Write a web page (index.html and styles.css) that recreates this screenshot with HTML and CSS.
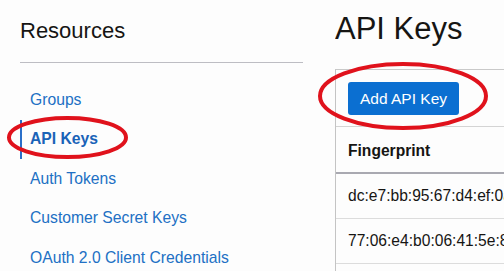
FILE: index.html
```html
<!DOCTYPE html>
<html lang="en">
<head>
<meta charset="utf-8">
<title>API Keys</title>
<link rel="stylesheet" href="styles.css">
</head>
<body>
<div class="page">
  <aside class="sidebar">
    <h2 class="res-title">Resources</h2>
    <div class="divider"></div>
    <nav class="nav">
      <a class="nav-item">Groups</a>
      <a class="nav-item active">API Keys</a>
      <a class="nav-item">Auth Tokens</a>
      <a class="nav-item">Customer Secret Keys</a>
      <a class="nav-item">OAuth 2.0 Client Credentials</a>
    </nav>
  </aside>
  <main class="main">
    <h1 class="page-title">API Keys</h1>
    <section class="panel">
      <div class="toolbar">
        <button class="btn-primary">Add API Key</button>
      </div>
      <div class="row head"><span class="cell">Fingerprint</span></div>
      <div class="row"><span class="cell">dc:e7:bb:95:67:d4:ef:0a:3c:91:5f:2b:7e:44:d1:08</span></div>
      <div class="row"><span class="cell">77:06:e4:b0:06:41:5e:8c:2a:19:f3:6d:b7:50:ce:12</span></div>
      <div class="row"><span class="cell"></span></div>
    </section>
  </main>
</div>
<svg class="annot" width="504" height="271" viewBox="0 0 504 271" aria-hidden="true">
  <ellipse cx="67.5" cy="137.5" rx="58.5" ry="19.5" fill="none" stroke="#e0121c" stroke-width="4"/>
  <ellipse cx="403" cy="96" rx="83" ry="32" fill="none" stroke="#e0121c" stroke-width="4"/>
</svg>
</body>
</html>
```
FILE: styles.css
```css
html, body {
  margin: 0;
  padding: 0;
  background: #fdfdfd;
  overflow: hidden;
}
body {
  font-family: "Liberation Sans", Arial, sans-serif;
  color: #161513;
  width: 504px;
  height: 271px;
  position: relative;
}
.page {
  display: flex;
  gap: 32px;
  height: 271px;
}
.sidebar {
  flex: 0 0 283px;
  padding-left: 20px;
}
.res-title {
  margin: 18px 0 0;
  font-size: 22px;
  line-height: 26px;
  font-weight: normal;
  color: #161513;
}
.divider {
  margin-top: 18px;
  border-top: 1px solid #bdbdc3;
}
.nav {
  display: flex;
  flex-direction: column;
  margin-top: 17px;
}
.nav-item {
  display: flex;
  align-items: center;
  height: 39.5px;
  padding-left: 8px;
  border-left: 2px solid transparent;
  font-size: 15.7px;
  line-height: 20px;
  color: #2170c4;
  text-decoration: none;
  white-space: nowrap;
}
.nav-item.active {
  border-left-color: #2a6fc9;
  font-weight: bold;
  color: #1a63b8;
}
.main {
  flex: 1;
  min-width: 0;
  overflow: hidden;
}
.page-title {
  margin: 11px 0 0;
  font-size: 31px;
  line-height: 36px;
  font-weight: normal;
  color: #161513;
  white-space: nowrap;
}
.panel {
  margin-top: 22px;
  width: 600px;
  border-top: 1px solid #c9c9c9;
  border-left: 1px solid #c4c4c4;
}
.toolbar {
  padding: 12px 12px 11px;
  border-bottom: 1px solid #d4d4d4;
  display: flex;
}
.btn-primary {
  height: 33px;
  padding: 0 12px;
  border: none;
  border-radius: 3px;
  background: #0b6fd1;
  color: #ffffff;
  font-family: "Liberation Sans", Arial, sans-serif;
  font-size: 15.5px;
}
.row {
  display: flex;
  align-items: center;
  height: 44px;
  padding-left: 12px;
  border-bottom: 1px solid #dcdcdc;
  font-size: 15.6px;
  line-height: 20px;
  white-space: nowrap;
}
.row.head {
  height: 45px;
  padding-top: 2px;
  box-sizing: border-box;
  border-bottom: 2px solid #a9a9b1;
  font-weight: bold;
}
.row.head {
  height: 47px;
}
.annot {
  position: absolute;
  left: 0;
  top: 0;
  pointer-events: none;
}
```
